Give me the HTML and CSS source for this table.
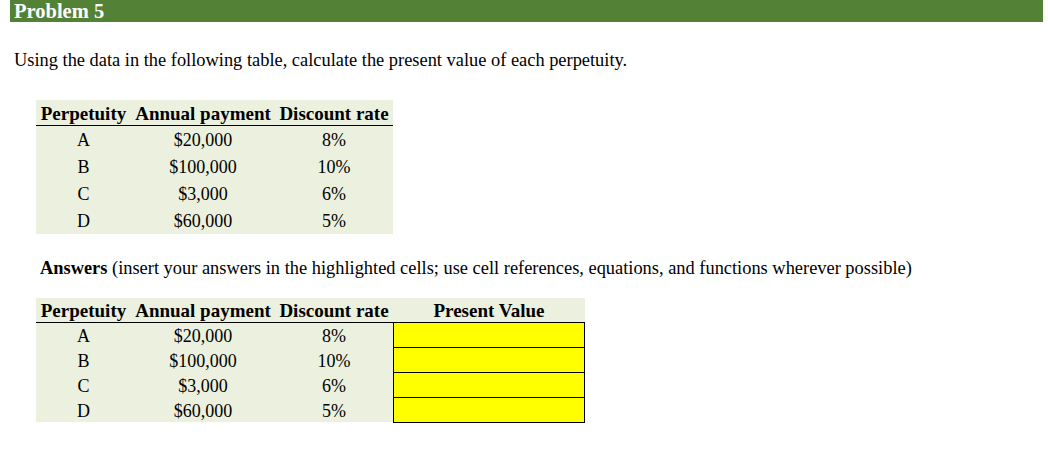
FILE: index.html
```html
<!DOCTYPE html>
<html>
<head>
<meta charset="utf-8">
<link rel="stylesheet" href="styles.css">
</head>
<body>
<div class="title-bar">Problem 5</div>
<p class="intro">Using the data in the following table, calculate the present value of each perpetuity.</p>

<div class="table t1">
  <div class="row head">
    <div class="c c1">Perpetuity</div>
    <div class="c c2">Annual payment</div>
    <div class="c c3">Discount rate</div>
  </div>
  <div class="row body"><div class="c c1">A</div><div class="c c2">$20,000</div><div class="c c3">8%</div></div>
  <div class="row body"><div class="c c1">B</div><div class="c c2">$100,000</div><div class="c c3">10%</div></div>
  <div class="row body"><div class="c c1">C</div><div class="c c2">$3,000</div><div class="c c3">6%</div></div>
  <div class="row body"><div class="c c1">D</div><div class="c c2">$60,000</div><div class="c c3">5%</div></div>
</div>

<p class="answers"><b>Answers</b> (insert your answers in the highlighted cells; use cell references, equations, and functions wherever possible)</p>

<div class="table t2">
  <div class="row head">
    <div class="c c1 ul">Perpetuity</div>
    <div class="c c2 ul">Annual payment</div>
    <div class="c c3 ul">Discount rate</div>
    <div class="c c4">Present Value</div>
  </div>
  <div class="row body"><div class="c c1">A</div><div class="c c2">$20,000</div><div class="c c3">8%</div><div class="c c4 input"></div></div>
  <div class="row body"><div class="c c1">B</div><div class="c c2">$100,000</div><div class="c c3">10%</div><div class="c c4 input"></div></div>
  <div class="row body"><div class="c c1">C</div><div class="c c2">$3,000</div><div class="c c3">6%</div><div class="c c4 input"></div></div>
  <div class="row body"><div class="c c1">D</div><div class="c c2">$60,000</div><div class="c c3">5%</div><div class="c c4 input last"></div></div>
</div>
</body>
</html>
```

FILE: styles.css
```css
html, body {
  margin: 0;
  padding: 0;
  background: #ffffff;
}
body {
  font-family: "Liberation Serif", "Times New Roman", serif;
  color: #000;
  width: 1048px;
  height: 455px;
  overflow: hidden;
}
.title-bar {
  margin-left: 10px;
  width: 1033px;
  height: 22px;
  background: #538135;
  color: #ffffff;
  font-weight: bold;
  font-size: 20.5px;
  line-height: 22px;
  padding-left: 4px;
  box-sizing: border-box;
}
.intro {
  margin: 27px 0 0 14px;
  font-size: 18.4px;
  line-height: 22px;
}
.table {
  margin-left: 36px;
  background: #ebf1de;
  display: flex;
  flex-direction: column;
}
.t1 {
  margin-top: 29px;
  width: 357px;
}
.t2 {
  margin-top: 19px;
  width: 549px;
}
.row {
  display: flex;
}
.c {
  text-align: center;
  font-size: 18px;
  box-sizing: border-box;
}
.c1 { width: 95px; }
.c2 { width: 144px; }
.c3 { width: 118px; }
.c4 { width: 192px; }
.head .c {
  font-weight: bold;
  font-size: 19px;
}
.t1 .head {
  height: 26px;
  line-height: 27px;
  border-bottom: 1px solid #000;
  box-sizing: border-box;
}
.t1 .body {
  height: 27px;
  line-height: 27px;
}
.t1 .body .c {
  padding-top: 1px;
}
.t2 .head {
  height: 24px;
  line-height: 25px;
}
.t2 .head .ul {
  box-shadow: 0 1px 0 #000;
}
.t2 .body {
  height: 25px;
  line-height: 25px;
}
.t2 .body .c {
  padding-top: 2px;
}
.t2 .body .input {
  padding-top: 0;
}
.input {
  background: #ffff00;
  border: 1px solid #000;
  border-bottom: none;
  height: 25px;
}
.input.last {
  border-bottom: 1px solid #000;
  height: 26px;
}
.answers {
  margin: 23px 0 0 40px;
  font-size: 18.4px;
  line-height: 22px;
}
```
